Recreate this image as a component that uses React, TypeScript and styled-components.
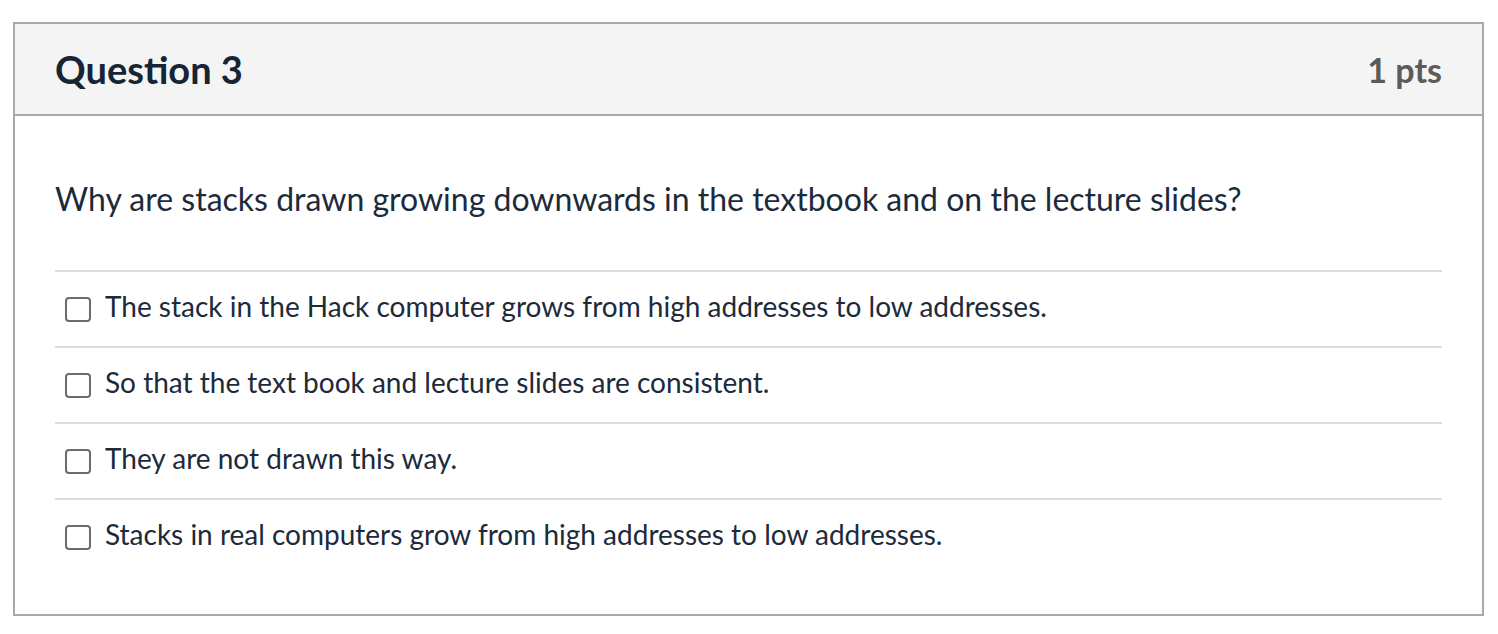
import React from "react";
import styled, { createGlobalStyle } from "styled-components";

const GlobalStyle = createGlobalStyle`
  html, body {
    margin: 0;
    padding: 0;
    background: #ffffff;
  }
  body {
    font-family: Lato, "Open Sans", "Liberation Sans", sans-serif;
    color: #1c2b3b;
  }
`;

const Page = styled.div`
  padding: 22px 14px 17px 13px;
`;

const Card = styled.section`
  border: 2px solid #a9a9a9;
  background: #ffffff;
`;

const Header = styled.header`
  display: flex;
  align-items: center;
  justify-content: space-between;
  height: 90px;
  padding: 0 40px;
  background: #f4f4f4;
  border-bottom: 2px solid #a9a9a9;
`;

const Title = styled.h2`
  margin: 0;
  font-size: 38px;
  font-weight: 700;
  color: #162433;
`;

const Points = styled.span`
  font-size: 34px;
  font-weight: 700;
  color: #5b5b5b;
`;

const Body = styled.div`
  padding: 63px 40px 40px 40px;
`;

const Prompt = styled.p`
  margin: 0 0 51px 0;
  font-size: 32px;
  line-height: 40px;
  color: #1c2b3b;
`;

const Answers = styled.div`
  display: flex;
  flex-direction: column;
  border-top: 2px solid #dddddd;
`;

const Answer = styled.label<{ $last?: boolean }>`
  display: flex;
  align-items: center;
  gap: 14px;
  height: 74px;
  padding-left: 10px;
  font-size: 28px;
  color: #1c2b3b;
  border-bottom: ${(p) => (p.$last ? "none" : "2px solid #dddddd")};
`;

const AnswerText = styled.span`
  margin-bottom: 6px;
`;

const Box = styled.span`
  box-sizing: border-box;
  width: 26px;
  height: 25px;
  border: 2px solid #6b6b6b;
  border-radius: 4px;
  flex-shrink: 0;
`;

const answers = [
  "The stack in the Hack computer grows from high addresses to low addresses.",
  "So that the text book and lecture slides are consistent.",
  "They are not drawn this way.",
  "Stacks in real computers grow from high addresses to low addresses.",
];

export default function App() {
  return (
    <>
      <GlobalStyle />
      <Page>
        <Card>
          <Header>
            <Title>Question 3</Title>
            <Points>1 pts</Points>
          </Header>
          <Body>
            <Prompt>
              Why are stacks drawn growing downwards in the textbook and on the lecture slides?
            </Prompt>
            <Answers>
              {answers.map((a, i) => (
                <Answer key={i} $last={i === answers.length - 1}>
                  <Box />
                  <AnswerText>{a}</AnswerText>
                </Answer>
              ))}
            </Answers>
          </Body>
        </Card>
      </Page>
    </>
  );
}
